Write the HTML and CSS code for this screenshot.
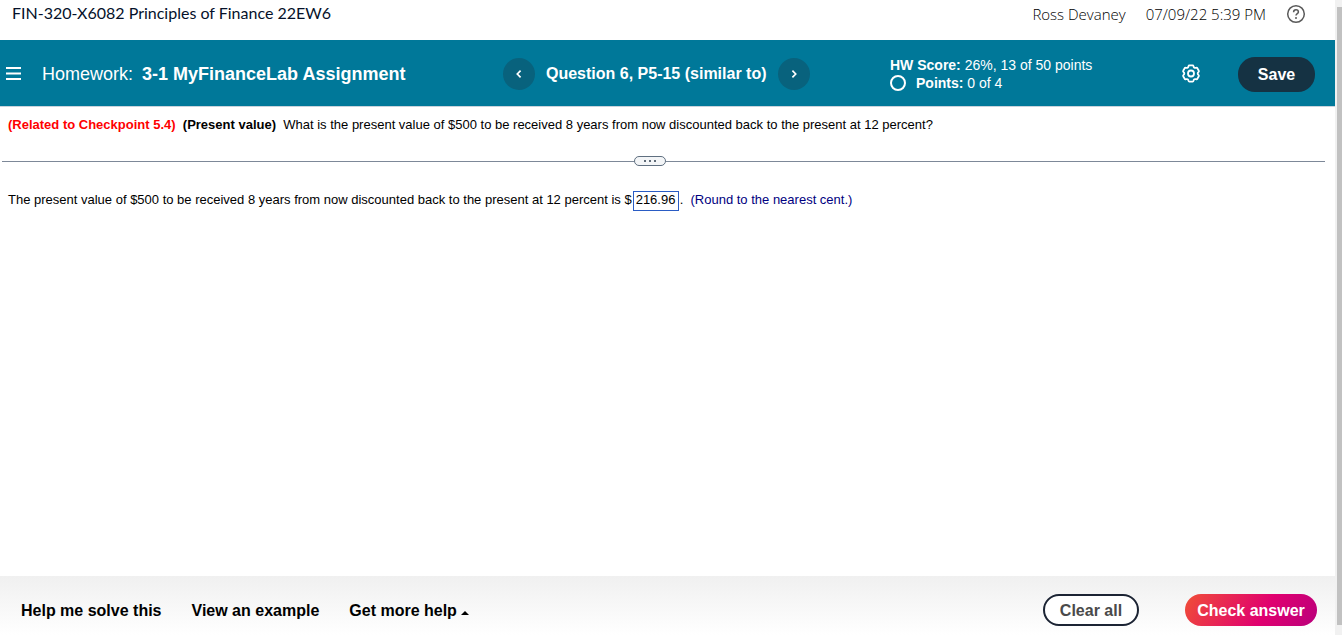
FILE: index.html
```html
<!DOCTYPE html>
<html lang="en">
<head>
  <meta charset="UTF-8">
  <meta name="viewport" content="width=device-width, initial-scale=1.0">
  <title>3-1 MyFinanceLab Assignment</title>
  <link rel="stylesheet" href="styles.css">
</head>
<body>

  <div class="app">
    <!-- Course bar -->
    <header class="course-bar">
      <span class="course-name">FIN-320-X6082 Principles of Finance 22EW6</span>
      <div class="user-info">
        <span>Ross Devaney</span>
        <span>07/09/22 5:39 PM</span>
        <button class="icon-button" aria-label="Help">
          <svg width="20" height="20" viewBox="0 0 20 20" fill="none" stroke="#5a5a5a">
            <circle cx="10" cy="10" r="8.3" stroke-width="1.5"/>
            <path d="M7.6 8.2C7.6 6.6 8.6 5.7 10 5.7S12.4 6.6 12.4 7.9C12.4 9.6 10 9.6 10 11.6" stroke-width="1.5"/>
            <circle cx="10" cy="14" r="1" fill="#5a5a5a" stroke="none"/>
          </svg>
        </button>
      </div>
    </header>

    <!-- Assignment bar -->
    <nav class="assignment-bar">
      <div class="assignment">
        <button class="icon-button" aria-label="Menu">
          <svg width="16" height="16" viewBox="0 0 16 16" stroke="#fff" stroke-width="1.8">
            <path d="M0 2H15M0 7.5H15M0 13H15"/>
          </svg>
        </button>
        <h1 class="assignment-title"><span>Homework:</span> 3-1 MyFinanceLab Assignment</h1>
      </div>
      <div class="question-nav">
        <button class="round-button" aria-label="Previous question">
          <svg width="10" height="10" viewBox="0 0 10 10" fill="none" stroke="#fff" stroke-width="1.7"><path d="M6.6 1.7L3.3 5L6.6 8.3"/></svg>
        </button>
        <h2 class="question-title">Question 6, P5-15 (similar to)</h2>
        <button class="round-button" aria-label="Next question">
          <svg width="10" height="10" viewBox="0 0 10 10" fill="none" stroke="#fff" stroke-width="1.7"><path d="M3.4 1.7L6.7 5L3.4 8.3"/></svg>
        </button>
      </div>
      <div class="score">
        <div><b>HW Score:</b> 26%, 13 of 50 points</div>
        <div class="points"><i class="ring"></i><span><b>Points:</b> 0 of 4</span></div>
      </div>
      <div class="bar-actions">
        <button class="icon-button" aria-label="Settings">
          <svg width="20" height="20" viewBox="0 0 20 20" fill="none" stroke="#fff" stroke-width="1.8" stroke-linejoin="round">
            <path d="M8.3 1.4H11.7Q12.3 1.4 12.5 2.2C12.8 3.7 13.6 4.2 15.1 3.8Q15.9 3.5 16.3 4.1L17.8 6.8Q18.1 7.4 17.6 7.9C16.4 9 16.4 10 17.6 11.1Q18.1 11.6 17.8 12.2L16.3 14.9Q15.9 15.5 15.1 15.2C13.6 14.8 12.8 15.3 12.5 16.8Q12.3 17.6 11.7 17.6H8.3Q7.7 17.6 7.5 16.8C7.2 15.3 6.4 14.8 4.9 15.2Q4.1 15.5 3.7 14.9L2.2 12.2Q1.9 11.6 2.4 11.1C3.6 10 3.6 9 2.4 7.9Q1.9 7.4 2.2 6.8L3.7 4.1Q4.1 3.5 4.9 3.8C6.4 4.2 7.2 3.7 7.5 2.2Q7.7 1.4 8.3 1.4Z"/>
            <circle cx="10" cy="9.5" r="3"/>
          </svg>
        </button>
        <button class="button save">Save</button>
      </div>
    </nav>

    <!-- Question -->
    <main class="question">
      <p class="prompt"><b class="related">(Related to Checkpoint 5.4)</b>&nbsp; <b>(Present value)</b>&nbsp; What is the present value of $500 to be received 8 years from now discounted back to the present at 12 percent?</p>
      <div class="divider">
        <button class="handle" aria-label="Resize"><i></i><i></i><i></i></button>
      </div>
      <p class="answer-line"><label for="answer">The present value of $500 to be received 8 years from now discounted back to the present at 12 percent is $</label><input class="answer" id="answer" type="text" value="216.96"><span>.&nbsp; </span><span class="hint">(Round to the nearest cent.)</span></p>
    </main>

    <!-- Help and answer buttons -->
    <footer class="footer">
      <div class="help-links">
        <button class="help-link">Help me solve this</button>
        <button class="help-link">View an example</button>
        <button class="help-link">Get more help <i class="caret"></i></button>
      </div>
      <div class="answer-actions">
        <button class="button clear">Clear all</button>
        <button class="button check">Check answer</button>
      </div>
    </footer>
  </div>

  <div class="scroll-track"><div class="scroll-thumb"></div></div>

</body>
</html>
```

FILE: styles.css
```css
* {
  box-sizing: border-box;
}
body {
  margin: 0;
  display: flex;
  min-height: 100vh;
  font-family: "Liberation Sans", Arial, sans-serif;
  font-size: 13px;
  color: #000;
  background-color: #fff;
}
button {
  font-family: inherit;
  border: none;
  background: none;
  padding: 0;
  cursor: pointer;
}
h1, h2, p {
  margin: 0;
}
.app {
  flex: 1;
  display: flex;
  flex-direction: column;
}
.icon-button {
  display: flex;
}

/* Course bar */
.course-bar {
  display: flex;
  justify-content: space-between;
  align-items: flex-start;
  height: 40px;
  padding: 4px 29px 0 12px;
  color: #05112a;
}
.course-name {
  font-family: Lato, sans-serif;
  font-size: 16px;
  line-height: 18px;
}
.user-info {
  display: flex;
  align-items: center;
  gap: 20px;
  font-family: "Open Sans", "Noto Sans", sans-serif;
  font-size: 15px;
  font-weight: 300;
  line-height: 20px;
  color: #000;
}

/* Assignment bar */
.assignment-bar {
  display: grid;
  grid-template-columns: 503fr 387fr 250fr 195fr;
  align-items: center;
  height: 67px;
  padding-top: 2px;
  background-color: #007899;
  border-bottom: 1px solid #c9d3dc;
  color: #fff;
}
.assignment {
  display: flex;
  align-items: center;
  gap: 20px;
  padding-left: 6px;
}
.assignment-title {
  font-size: 18px;
}
.assignment-title span {
  font-weight: normal;
  margin-right: 4px;
}
.question-nav {
  display: flex;
  align-items: center;
  gap: 11px;
}
.question-title {
  font-size: 16px;
}
.round-button {
  display: flex;
  justify-content: center;
  align-items: center;
  width: 32px;
  height: 32px;
  border-radius: 50%;
  background-color: #08627d;
}
.score {
  font-size: 14px;
  line-height: 18px;
}
.points {
  display: flex;
  align-items: center;
  gap: 10px;
}
.ring {
  width: 16px;
  height: 16px;
  border: 2px solid #fff;
  border-radius: 50%;
}
.bar-actions {
  display: flex;
  justify-content: flex-end;
  align-items: center;
  gap: 37px;
  padding-right: 20px;
}
.button {
  height: 32px;
  padding-top: 2px;
  border-radius: 17px;
  font-size: 16px;
  font-weight: bold;
}
.save {
  width: 77px;
  height: 35px;
  background-color: #153243;
  color: #fff;
}

/* Question */
.question {
  flex: 1;
}
.prompt {
  padding: 10px 8px 0;
  line-height: 16px;
}
.related {
  color: #f00;
}
.divider {
  display: flex;
  align-items: center;
  height: 10px;
  margin: 23px 10px 24px 2px;
}
.divider::before, .divider::after {
  content: "";
  flex: 632;
  height: 1px;
  background-color: #7d8898;
}
.divider::after {
  flex: 659;
}
.handle {
  display: flex;
  justify-content: center;
  align-items: center;
  gap: 3px;
  width: 32px;
  height: 10px;
  border: 1px solid #5f6f80;
  border-radius: 5px;
  background-color: #f3f5f7;
}
.handle i {
  width: 2px;
  height: 2px;
  background-color: #5f6b78;
}
.answer-line {
  padding: 0 8px;
  line-height: 20px;
}
.answer {
  width: 46px;
  height: 20px;
  margin: 0 1px;
  padding: 0 2px 2px;
  border: 1px solid #2a5cc4;
  font-family: inherit;
  font-size: 13px;
  vertical-align: baseline;
}
.hint {
  color: #000080;
}

/* Footer */
.footer {
  display: flex;
  justify-content: space-between;
  align-items: center;
  height: 59px;
  padding: 9px 18px 0 21px;
  background: linear-gradient(#f0f0f0, #fff);
}
.help-links {
  display: flex;
  gap: 30px;
  padding-top: 2px;
}
.help-link {
  font-size: 16px;
  font-weight: bold;
}
.caret {
  display: inline-block;
  border: 4px solid transparent;
  border-top: none;
  border-bottom-color: #000;
  vertical-align: 1px;
}
.answer-actions {
  display: flex;
  gap: 46px;
}
.clear {
  width: 96px;
  border: 2px solid #1c2434;
  background-color: #fff;
  color: #4a4a4a;
}
.check {
  width: 132px;
  background: linear-gradient(120deg, #f04e37, #e0006f 60%, #b9007c);
  color: #fff;
}

/* Scrollbar */
.scroll-track {
  width: 7px;
  padding: 7px 0 10px 2px;
  background-color: #f1f1f1;
}
.scroll-thumb {
  height: 100%;
  background-color: #c1c1c1;
}
```
